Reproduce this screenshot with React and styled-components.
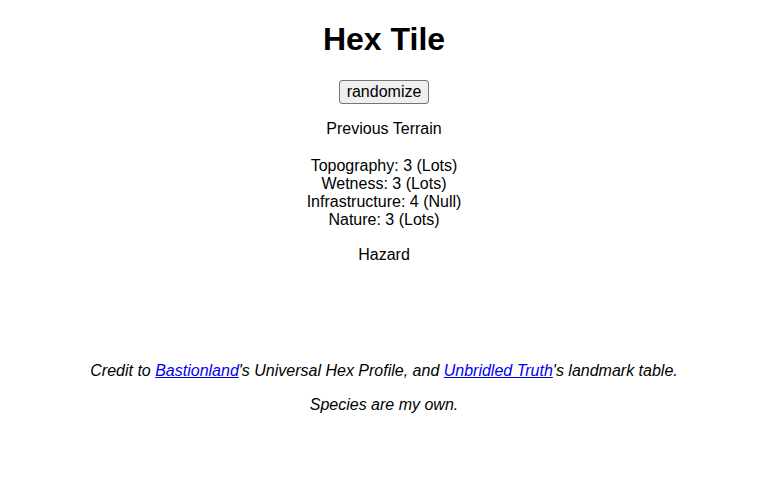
import React from "react";
import styled, { createGlobalStyle } from "styled-components";

const Global = createGlobalStyle`
  html, body { padding: 0; background: #fff; }
  html { margin: 0; }
  body {
    margin: 0 8px 8px;
    font-family: "Liberation Sans", Arial, sans-serif;
    font-size: 16px;
    color: #000;
  }
`;

const Page = styled.main`
  text-align: center;
`;

const Title = styled.h1`
  font-size: 32px;
  font-weight: bold;
  margin: 21.44px 0;
`;

const Button = styled.button`
  font-family: "Liberation Sans", Arial, sans-serif;
  font-size: 16px;
  line-height: normal;
  color: #000;
  background: #efefef;
  border: 1px solid #767676;
  border-radius: 3px;
  padding: 1px 7px;
  margin: 0;
  height: 24px;
  cursor: default;
`;

const Para = styled.p`
  margin: ${(p) => p.$top ?? 16}px 0 16px;
  line-height: normal;
`;

const Credits = styled.section`
  margin-top: 98px;
  font-style: italic;
`;

const Link = styled.a`
  color: #0000ee;
  text-decoration: underline;
`;

export default function App() {
  return (
    <>
      <Global />
      <Page>
        <Title>Hex Tile</Title>
        <Button>randomize</Button>
        <Para>Previous Terrain</Para>
        <Para $top={19}>
          Topography: 3 (Lots)
          <br />
          Wetness: 3 (Lots)
          <br />
          Infrastructure: 4 (Null)
          <br />
          Nature: 3 (Lots)
        </Para>
        <Para $top={17}>Hazard</Para>
        <Credits>
          <Para>
            Credit to <Link href="#">Bastionland</Link>'s Universal Hex Profile, and{" "}
            <Link href="#">Unbridled Truth</Link>'s landmark table.
          </Para>
          <Para>Species are my own.</Para>
        </Credits>
      </Page>
    </>
  );
}
